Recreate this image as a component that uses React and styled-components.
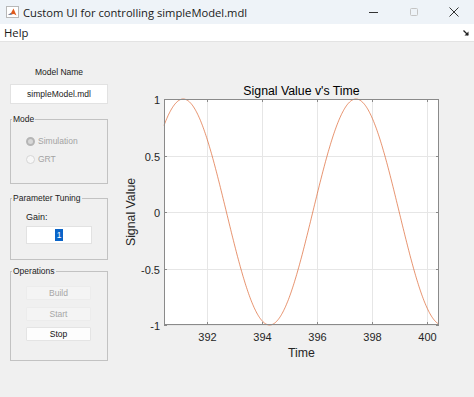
import styled, { createGlobalStyle } from "styled-components";

const GlobalStyle = createGlobalStyle`
  html, body {
    margin: 0;
    padding: 0;
    background: #f0f0f0;
    overflow: hidden;
  }
`;

// Plot range and geometry (svg local coords)
const X0 = 390.43;
const X1 = 400.43;
const L = 46;
const R = 321;
const T = 57;
const B = 283;
const sx = (t) => L + ((t - X0) * (R - L)) / (X1 - X0);
const sy = (v) => (T + B) / 2 - (v * (B - T)) / 2;
const X_TICKS = [392, 394, 396, 398, 400];
const Y_TICKS = [1, 0.5, 0, -0.5, -1];

const buildPath = () => {
  const pts = [];
  for (let i = 0; i <= 400; i++) {
    const t = X0 + ((X1 - X0) * i) / 400;
    pts.push(`${sx(t).toFixed(2)},${sy(Math.sin(t)).toFixed(2)}`);
  }
  return "M" + pts.join(" L");
};

const SignalPlot = () => (
  <svg width="356" height="355" viewBox="0 0 356 355">
    <rect x={L} y={T} width={R - L} height={B - T} fill="#ffffff" />
    {X_TICKS.map((t) => (
      <line key={"gx" + t} x1={Math.round(sx(t)) + 0.5} x2={Math.round(sx(t)) + 0.5} y1={T} y2={B} stroke="#e6e6e6" strokeWidth="1" />
    ))}
    {Y_TICKS.map((v) => (
      <line key={"gy" + v} x1={L} x2={R} y1={Math.round(sy(v)) + 0.5} y2={Math.round(sy(v)) + 0.5} stroke="#e6e6e6" strokeWidth="1" />
    ))}
    <path d={buildPath()} fill="none" stroke="#d95319" strokeWidth="0.8" strokeOpacity="0.78" />
    <rect x={L + 0.5} y={T + 0.5} width={R - L - 1} height={B - T - 1} fill="none" stroke="#8a8a8a" strokeWidth="1" />
    {X_TICKS.map((t) => {
      const x = Math.round(sx(t)) + 0.5;
      return (
        <g key={"tx" + t}>
          <line x1={x} x2={x} y1={B} y2={B - 3} stroke="#8a8a8a" />
          <line x1={x} x2={x} y1={T} y2={T + 3} stroke="#8a8a8a" />
          <text x={x} y={299} textAnchor="middle" fontSize="11" fill="#262626" fontFamily="Liberation Sans, Arial, sans-serif">
            {t}
          </text>
        </g>
      );
    })}
    {Y_TICKS.map((v) => {
      const y = Math.round(sy(v)) + 0.5;
      return (
        <g key={"ty" + v}>
          <line x1={L} x2={L + 3} y1={y} y2={y} stroke="#8a8a8a" />
          <line x1={R} x2={R - 3} y1={y} y2={y} stroke="#8a8a8a" />
          <text x={42} y={y + 4} textAnchor="end" fontSize="11" fill="#262626" fontFamily="Liberation Sans, Arial, sans-serif">
            {v}
          </text>
        </g>
      );
    })}
    <text x={(L + R) / 2} y={53} textAnchor="middle" fontSize="12.3" fill="#000" fontFamily="Liberation Sans, Arial, sans-serif">
      Signal Value v's Time
    </text>
    <text x={(L + R) / 2} y={315} textAnchor="middle" fontSize="12.3" fill="#262626" fontFamily="Liberation Sans, Arial, sans-serif">
      Time
    </text>
    <text x={16.5} y={170} transform="rotate(-90 16.5 170)" textAnchor="middle" fontSize="12.3" fill="#262626" fontFamily="Liberation Sans, Arial, sans-serif">
      Signal Value
    </text>
  </svg>
);

const MatlabIcon = () => (
  <svg width="13" height="12" viewBox="0 0 13 12">
    <rect x="0.5" y="0.5" width="12" height="11" fill="#fff" stroke="#b8b8b8" />
    <path d="M2 9 L5 7 L7.5 2.5 L10.5 9.5 L8 8 Z" fill="#e05a1c" />
    <path d="M2 9 L5 7 L6 8.5 Z" fill="#4a7fb5" />
  </svg>
);

export default function App() {
  return (
    <>
      <GlobalStyle />
      <Window>
        <TitleBar>
          <MatlabIcon />
          <TitleText>Custom UI for controlling simpleModel.mdl</TitleText>
          <WindowControls>
            <CtrlButton>
              <svg width="10" height="10" viewBox="0 0 10 10">
                <line x1="0" x2="9" y1="5.5" y2="5.5" stroke="#333" strokeWidth="1" />
              </svg>
            </CtrlButton>
            <CtrlButton>
              <svg width="10" height="10" viewBox="0 0 10 10">
                <rect x="1.5" y="1.5" width="7" height="7" fill="none" stroke="#c4c4c4" strokeWidth="1" rx="1" />
              </svg>
            </CtrlButton>
            <CtrlButton>
              <svg width="10" height="10" viewBox="0 0 10 10">
                <path d="M0.5 0.5 L9.5 9.5 M9.5 0.5 L0.5 9.5" stroke="#333" strokeWidth="1" />
              </svg>
            </CtrlButton>
          </WindowControls>
        </TitleBar>
        <MenuBar>
          <MenuItem>Help</MenuItem>
          <svg width="6" height="6" viewBox="0 0 6 6">
            <path d="M0.5 0.5 L5 5" stroke="#222" strokeWidth="1.2" />
            <path d="M5.5 1.5 L5.5 5.5 L1.5 5.5 Z" fill="#222" />
          </svg>
        </MenuBar>
        <Body>
          <Sidebar>
            <FieldLabel>Model Name</FieldLabel>
            <NameBox>simpleModel.mdl</NameBox>

            <Panel $height={70} $gap={10}>
              <Legend>Mode</Legend>
              <PanelInner $top={8}>
                <RadioRow>
                  <RadioDot $checked />
                  Simulation
                </RadioRow>
                <RadioRow>
                  <RadioDot />
                  GRT
                </RadioRow>
              </PanelInner>
            </Panel>

            <Panel $height={67} $gap={9}>
              <Legend>Parameter Tuning</Legend>
              <PanelInner $top={8.5}>
                <GainLabel>Gain:</GainLabel>
                <GainBox>
                  <Selected>1</Selected>
                </GainBox>
              </PanelInner>
            </Panel>

            <Panel $height={95} $gap={6}>
              <Legend>Operations</Legend>
              <PanelInner $top={10}>
                <ButtonStack>
                  <PushButton disabled>Build</PushButton>
                  <PushButton disabled>Start</PushButton>
                  <PushButton>Stop</PushButton>
                </ButtonStack>
              </PanelInner>
            </Panel>
          </Sidebar>
          <PlotArea>
            <SignalPlot />
          </PlotArea>
        </Body>
      </Window>
    </>
  );
}

// Styled components

const Window = styled.div`
  width: 474px;
  height: 397px;
  display: flex;
  flex-direction: column;
  background: #f0f0f0;
  overflow: hidden;
`;

const TitleBar = styled.div`
  height: 24px;
  display: flex;
  align-items: center;
  padding-left: 6px;
  background: #eef3f8;
  box-sizing: border-box;
`;

const TitleText = styled.span`
  margin-left: 4px;
  font-family: "Open Sans", "Noto Sans", sans-serif;
  font-size: 11.2px;
  color: #1a1a1a;
  flex: 1;
  white-space: nowrap;
`;

const WindowControls = styled.div`
  display: flex;
  height: 100%;
`;

const CtrlButton = styled.div`
  width: 40px;
  height: 100%;
  display: flex;
  align-items: center;
  justify-content: center;
`;

const MenuBar = styled.div`
  height: 17px;
  display: flex;
  align-items: center;
  justify-content: space-between;
  padding: 0 5px 0 4px;
  background: #ffffff;
  border-bottom: 1px solid #e3e3e3;
`;

const MenuItem = styled.span`
  font-family: "Open Sans", "Noto Sans", sans-serif;
  font-size: 11.3px;
  color: #1a1a1a;
`;

const Body = styled.div`
  flex: 1;
  display: flex;
`;

const Sidebar = styled.div`
  width: 98px;
  padding: 25px 10px 0 10px;
  display: flex;
  flex-direction: column;
  font-family: "Liberation Sans", Arial, sans-serif;
  font-size: 8.5px;
  color: #1a1a1a;
`;

const FieldLabel = styled.div`
  line-height: 10px;
  height: 10px;
  text-align: center;
`;

const NameBox = styled.div`
  margin-top: 7px;
  height: 20px;
  box-sizing: border-box;
  background: #fff;
  border: 1px solid #e2e2e2;
  display: flex;
  align-items: center;
  justify-content: center;
`;

const Panel = styled.fieldset`
  margin: ${(p) => p.$gap}px 0 0 0;
  padding: 0;
  height: ${(p) => p.$height}px;
  box-sizing: border-box;
  border: 1px solid #c2c2c2;
  min-width: 0;
`;

const Legend = styled.legend`
  margin-left: 1px;
  padding: 0 1px;
  line-height: 10px;
  font-size: 8.5px;
  color: #222;
`;

const PanelInner = styled.div`
  padding: ${(p) => p.$top}px 0 0 15px;
`;

const RadioRow = styled.div`
  height: 18px;
  display: flex;
  align-items: center;
  gap: 3px;
  color: #a3a3a3;
`;

const RadioDot = styled.span`
  width: 9px;
  height: 9px;
  box-sizing: border-box;
  border-radius: 50%;
  border: ${(p) => (p.$checked ? "2.5px solid #b5b5b5" : "1px solid #d6d6d6")};
  background: ${(p) => (p.$checked ? "#d8d8d8" : "#f7f7f7")};
`;

const GainLabel = styled.div`
  font-size: 9px;
  line-height: 11px;
`;

const GainBox = styled.div`
  margin-top: 3.5px;
  width: 66px;
  height: 18px;
  box-sizing: border-box;
  background: #fff;
  border: 1px solid #e2e2e2;
  display: flex;
  align-items: center;
  justify-content: center;
`;

const Selected = styled.span`
  background: #0a64c8;
  color: #fff;
  padding: 0 1.5px;
  line-height: 12px;
`;

const ButtonStack = styled.div`
  display: flex;
  flex-direction: column;
  gap: 6.5px;
`;

const PushButton = styled.button`
  width: 65px;
  height: 14px;
  padding: 0;
  margin: 0;
  font-family: "Liberation Sans", Arial, sans-serif;
  font-size: 8.5px;
  border: 1px solid ${(p) => (p.disabled ? "#ececec" : "#e4e4e4")};
  background: ${(p) => (p.disabled ? "#f4f4f4" : "#fdfdfd")};
  color: ${(p) => (p.disabled ? "#a6a6a6" : "#111")};
  border-radius: 1px;
`;

const PlotArea = styled.div`
  flex: 1;
  svg {
    display: block;
  }
`;
